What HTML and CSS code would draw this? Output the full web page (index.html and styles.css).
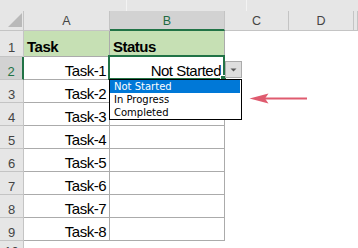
FILE: index.html
```html
<!DOCTYPE html>
<html>
<head>
<meta charset="utf-8">
<link rel="stylesheet" href="styles.css">
</head>
<body>
<div class="screen">
  <div class="topbar"><span class="seg s1"></span><span class="seg s2"></span><span class="seg s3"></span></div>
  <div class="sheet">
    <div class="hd corner"><span class="tri"></span></div>
    <div class="hd">A</div>
    <div class="hd selcol">B</div>
    <div class="hd">C</div>
    <div class="hd">D</div>
    <div class="hd"></div>

    <div class="rh first">1</div>
    <div class="c head">Task</div>
    <div class="c head">Status</div>
    <div class="blank"></div><div class="blank"></div><div class="blank"></div>

    <div class="rh selrow">2</div>
    <div class="c r">Task-1</div>
    <div class="c r active">Not Started
      <span class="handle"></span>
      <span class="ddbtn"><svg width="7" height="4" viewBox="0 0 7 4"><path d="M0.5 0.5 H6.5 L3.5 3.5 Z" fill="#5a5a5a"/></svg></span>
      <div class="ddlist">
        <div class="opt on">Not Started</div>
        <div class="opt">In Progress</div>
        <div class="opt">Completed</div>
      </div>
    </div>
    <div class="blank"></div><div class="blank"></div><div class="blank"></div>

    <div class="rh">3</div>
    <div class="c r">Task-2</div><div class="c"></div>
    <div class="blank"></div><div class="blank"></div><div class="blank"></div>

    <div class="rh">4</div>
    <div class="c r">Task-3</div><div class="c"></div>
    <div class="blank"></div><div class="blank"></div><div class="blank"></div>

    <div class="rh">5</div>
    <div class="c r">Task-4</div><div class="c"></div>
    <div class="blank"></div><div class="blank"></div><div class="blank"></div>

    <div class="rh">6</div>
    <div class="c r">Task-5</div><div class="c"></div>
    <div class="blank"></div><div class="blank"></div><div class="blank"></div>

    <div class="rh">7</div>
    <div class="c r">Task-6</div><div class="c"></div>
    <div class="blank"></div><div class="blank"></div><div class="blank"></div>

    <div class="rh">8</div>
    <div class="c r">Task-7</div><div class="c"></div>
    <div class="blank"></div><div class="blank"></div><div class="blank"></div>

    <div class="rh">9</div>
    <div class="c r">Task-8</div><div class="c"></div>
    <div class="blank"></div><div class="blank"></div><div class="blank"></div>

    <div class="rh last">10</div>
    <div class="blank"></div><div class="blank"></div>
    <div class="blank"></div><div class="blank"></div><div class="blank"></div>
  </div>
  <svg class="arrow" width="59" height="11" viewBox="0 0 59 11">
    <path d="M0.5 5.5 L19.5 0.5 L16 5.5 L19.5 10.5 Z" fill="#df5b6f"/>
    <rect x="16" y="4.5" width="42" height="2" fill="#df5b6f"/>
  </svg>
</div>
</body>
</html>
```
FILE: styles.css
```css
html, body {
  margin: 0;
  padding: 0;
  background: #fff;
}
body {
  width: 358px;
  height: 248px;
  overflow: hidden;
  font-family: "Liberation Sans", Arial, sans-serif;
}
.screen {
  position: relative;
  width: 358px;
  height: 248px;
  overflow: hidden;
}
.topbar {
  height: 11px;
  display: flex;
  gap: 1px;
  background: #f3f3f3;
}
.seg { background: #e6e6e6; height: 11px; }
.s1 { width: 126px; }
.s2 { width: 119px; }
.s3 { flex: 1; }

.sheet {
  display: grid;
  grid-template-columns: 24px 86px 115px 64px 65px 1fr;
  grid-template-rows: 20px 26px repeat(8, 23px) 23px;
}
.hd {
  box-sizing: border-box;
  background: #e6e6e6;
  border-right: 1px solid #c4c4c4;
  border-bottom: 1px solid #c4c4c4;
  display: flex;
  justify-content: center;
  align-items: center;
  font-size: 12.5px;
  line-height: 12px;
  color: #444;
  padding-top: 1px;
}
.hd.corner {
  justify-content: flex-end;
  align-items: flex-end;
  padding: 0 1px 3px 0;
}
.tri {
  width: 0;
  height: 0;
  border-left: 14px solid transparent;
  border-bottom: 14px solid #b9b9b9;
}
.hd.selcol {
  background: #d2d2d2;
  color: #1e6b42;
  border-bottom: 2px solid #217346;
}
.rh {
  box-sizing: border-box;
  background: #e6e6e6;
  border-right: 1px solid #c4c4c4;
  border-bottom: 1px solid #c4c4c4;
  display: flex;
  justify-content: center;
  align-items: flex-end;
  padding-bottom: 1px;
  font-size: 13px;
  line-height: 13px;
  color: #444;
}
.rh.first { padding-bottom: 2px; }
.rh.last { padding-bottom: 5px; }
.rh.selrow {
  background: #d2d2d2;
  color: #217346;
  border-right: 2px solid #217346;
}
.c {
  box-sizing: border-box;
  border-right: 1px solid #ababab;
  border-bottom: 1px solid #ababab;
  display: flex;
  align-items: flex-end;
  padding: 0 3px 1px 3px;
  font-size: 15px;
  line-height: 15px;
  letter-spacing: -0.5px;
  color: #000;
  white-space: nowrap;
}
.c.r { justify-content: flex-end; }
.c.head {
  background: #c6e0b4;
  font-weight: bold;
  padding-bottom: 2px;
}
.blank { background: #fff; }

.c.active {
  position: relative;
  z-index: 3;
}
.c.active::before {
  content: "";
  position: absolute;
  top: -2px;
  left: -2px;
  right: -1px;
  bottom: -1px;
  border: 2px solid #217346;
}
.handle {
  position: absolute;
  right: -3px;
  bottom: -3px;
  width: 5px;
  height: 5px;
  background: #217346;
  border: 1px solid #fff;
  box-sizing: content-box;
}
.ddbtn {
  position: absolute;
  left: calc(100% + 1px);
  top: 4px;
  width: 17px;
  height: 17px;
  box-sizing: border-box;
  background: #dedede;
  border: 1px solid #ababab;
  display: flex;
  justify-content: center;
  align-items: center;
}
.ddbtn svg { display: block; }
.ddlist {
  position: absolute;
  left: -1px;
  top: 22px;
  width: 133px;
  box-sizing: border-box;
  border: 1px solid #000;
  background: #fff;
  font-family: "DejaVu Sans", Tahoma, sans-serif;
  font-size: 10px;
  line-height: 13px;
  letter-spacing: 0;
  text-align: left;
}
.opt {
  height: 13px;
  padding-left: 4px;
  color: #000;
  white-space: nowrap;
}
.opt.on {
  background: #0078d7;
  color: #fff;
  margin-right: 1px;
}
.arrow {
  position: absolute;
  left: 249px;
  top: 93px;
  display: block;
}
```
